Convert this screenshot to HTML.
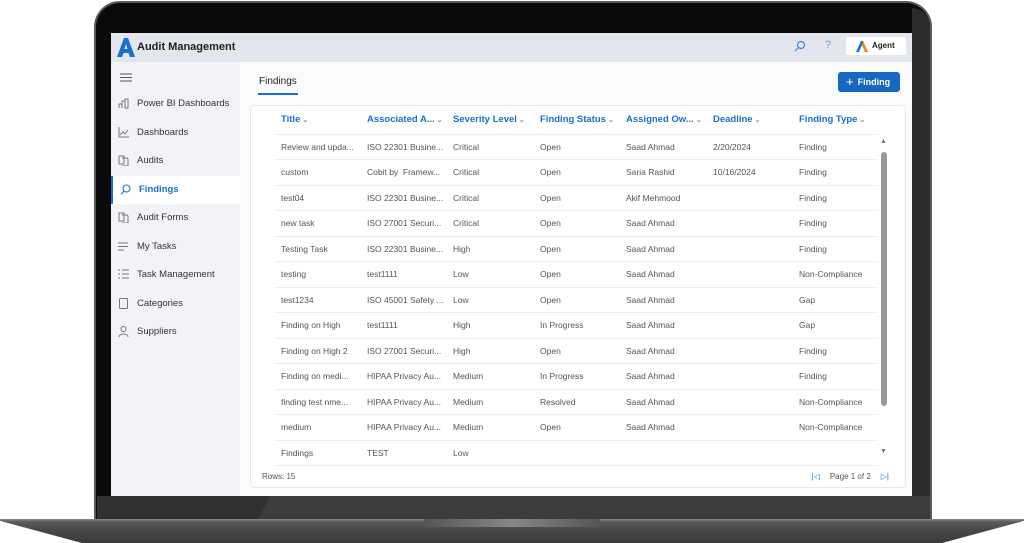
<!DOCTYPE html>
<html><head><meta charset="utf-8"><style>
*{margin:0;padding:0;box-sizing:border-box}
body{width:1024px;height:543px;background:#fff;position:relative;overflow:hidden;font-family:"Liberation Sans",sans-serif}
.bez{position:absolute;left:94px;top:1px;width:838px;height:522px;background:#0a0a0a;border-radius:26px 26px 0 0;border:2px solid #5a5a5a;border-bottom:none}
.bezr{position:absolute;left:912px;top:8px;width:18px;height:512px;background:#2c2c2c;border-radius:0 20px 0 0}
.chin{position:absolute;left:97px;top:496px;width:832px;height:24px;background:#303030}
.chinrefl{position:absolute;left:258px;top:496px;width:672px;height:24px;background:#3c3c3c;clip-path:polygon(12px 0,100% 0,100% 100%,0 100%)}
.base{position:absolute;left:0;top:519px;width:1024px;height:24px;background:linear-gradient(#8a8a8a 0,#5a5a5a 3px,#4a4a4a 10px,#3a3a3a 100%);clip-path:polygon(0 0,100% 0,100% 8%,92% 100%,8% 100%,0 8%)}
.notch{position:absolute;left:424px;top:519px;width:176px;height:8px;background:linear-gradient(90deg,#555,#888,#555);border-radius:0 0 4px 4px}
.screen{position:absolute;left:111px;top:33px;width:801px;height:463px;background:#fff;overflow:hidden}
.hdr{position:absolute;left:0;top:0;width:801px;height:29px;background:#e3e6ec}
.hdr .t{position:absolute;left:26px;top:8px;font-size:11px;font-weight:bold;color:#222}
.side{position:absolute;left:0;top:29px;width:129px;height:434px;background:#f2f3f6}
.nav{position:absolute;left:0;width:129px;height:28px;font-size:9.5px;color:#333;padding-left:26px;line-height:28px}
.nav svg{position:absolute;left:7px;top:8px}
.nav.act{background:#fff;color:#1a6fd0;font-weight:bold;border-left:2px solid #1a6fd0}
.main{position:absolute;left:129px;top:29px;width:672px;height:434px;background:#fafbfc}
.tab{position:absolute;left:19px;top:14px;font-size:10px;color:#222}
.tabline{position:absolute;left:18px;top:31px;width:40px;height:2px;background:#1a6fd0}
.btn{position:absolute;left:598px;top:10px;width:62px;height:20px;background:#1668c0;border-radius:3px;color:#fff;font-size:9px;font-weight:bold;line-height:20px;padding-left:8px}
.card{position:absolute;left:10px;top:43px;width:656px;height:383px;background:#fff;border:1px solid #e6e8ec;border-radius:4px}
table{position:absolute;left:24px;top:0;border-collapse:collapse;font-size:8.5px;color:#555}
td,th{height:25.5px;text-align:left;padding-left:6px;white-space:nowrap;border-bottom:1px solid #eceef1}
th{color:#1a6fd0;font-size:9.5px;height:28px;font-weight:bold}
th span{font-size:7px;color:#888;margin-left:2px}
.sb{position:absolute;left:630px;top:46px;width:6px;height:254px;background:#999;border-radius:3px}
.foot{position:absolute;left:11px;top:366px;font-size:8px;color:#555}
.pg{position:absolute;right:16px;top:366px;font-size:8px;color:#555}
</style></head><body>
<div class="bez"></div><div class="bezr"></div>
<div class="chin"></div><div class="chinrefl"></div>
<div class="base"></div><div class="notch"></div>
<div class="screen">
<div class="hdr">
<svg style="position:absolute;left:6px;top:5px" width="18" height="19" viewBox="0 0 18 19"><path d="M7 0h4l7 19h-5l-1.5-4h-5L5 19H0z" fill="#1a6fd0"/><path d="M7.5 11h3L9 6z" fill="#e3e6ec"/></svg>
<div class="t">Audit Management</div>
<svg style="position:absolute;left:683px;top:7px" width="12" height="12" viewBox="0 0 12 12"><circle cx="7" cy="5" r="3.5" fill="none" stroke="#3a86d8" stroke-width="1.2"/><path d="M4.5 7.5L1 11" stroke="#3a86d8" stroke-width="1.2"/></svg>
<div style="position:absolute;left:714px;top:6px;font-size:11px;color:#6a9ede">?</div>
<div style="position:absolute;left:735px;top:4px;width:60px;height:18px;background:#fff;border-radius:2px;font-size:8px;font-weight:bold;color:#222;line-height:18px;padding-left:26px">Agent
<svg style="position:absolute;left:10px;top:4px" width="12" height="11" viewBox="0 0 12 11"><path d="M5 0h2l5 11h-3L6 4 3 11H0z" fill="#1a6fd0"/><path d="M7 0l5 11H9L6 4z" fill="#f08a1c"/></svg></div>
</div>
<div class="side">
<svg style="position:absolute;left:9px;top:11px" width="12" height="9"><path d="M0 1h12M0 4.5h12M0 8h12" stroke="#555" stroke-width="1"/></svg>
<div class="nav" style="top:28px"><svg width="11" height="11"><path d="M1 10V6h3v4M4 10V3h3v7M7 10V1h3v9z" fill="none" stroke="#777"/></svg>Power BI Dashboards</div>
<div class="nav" style="top:57px"><svg width="11" height="11"><path d="M1 0v10h10M2 8l3-3 2 2 3-4" fill="none" stroke="#777"/></svg>Dashboards</div>
<div class="nav" style="top:85px"><svg width="11" height="11"><path d="M1 1h5v8H1zM4 3h5l1 1v7H4" fill="none" stroke="#777"/></svg>Audits</div>
<div class="nav act" style="top:114px"><svg width="11" height="11"><circle cx="6.5" cy="4.5" r="3.5" fill="none" stroke="#1a6fd0"/><path d="M4 7L1 10.5" stroke="#1a6fd0"/></svg>Findings</div>
<div class="nav" style="top:142px"><svg width="11" height="11"><path d="M1 1h5v8H1zM4 3h5l1 1v7H4" fill="none" stroke="#777"/></svg>Audit Forms</div>
<div class="nav" style="top:171px"><svg width="11" height="11"><path d="M0 2h10M0 5.5h10M0 9h6" stroke="#777"/></svg>My Tasks</div>
<div class="nav" style="top:199px"><svg width="11" height="11"><path d="M0 1h2M0 5h2M0 9h2M4 1h7M4 5h7M4 9h7" stroke="#777"/></svg>Task Management</div>
<div class="nav" style="top:228px"><svg width="11" height="11"><rect x="1.5" y=".5" width="8" height="10" rx="1" fill="none" stroke="#777"/></svg>Categories</div>
<div class="nav" style="top:256px"><svg width="11" height="11"><circle cx="5.5" cy="3" r="2.5" fill="none" stroke="#777"/><path d="M1 11c0-4 9-4 9 0" fill="none" stroke="#777"/></svg>Suppliers</div>
</div>
<div class="main">
<div class="tab">Findings</div><div class="tabline"></div>
<div class="btn"><span style="font-size:13px;font-weight:normal;vertical-align:-1px;margin-right:4px">+</span>Finding</div>
<div class="card">
<table>
<colgroup><col style="width:86px"><col style="width:86px"><col style="width:87px"><col style="width:86px"><col style="width:87px"><col style="width:86px"><col style="width:85px"></colgroup>
<tr><th>Title<span>⌄</span></th><th>Associated A...<span>⌄</span></th><th>Severity Level<span>⌄</span></th><th>Finding Status<span>⌄</span></th><th>Assigned Ow...<span>⌄</span></th><th>Deadline<span>⌄</span></th><th>Finding Type<span>⌄</span></th></tr>
<tr><td>Review and upda...</td><td>ISO 22301 Busine...</td><td>Critical</td><td>Open</td><td>Saad Ahmad</td><td>2/20/2024</td><td>Finding</td></tr>
<tr><td>custom</td><td>Cobit by &nbsp;Framew...</td><td>Critical</td><td>Open</td><td>Saria Rashid</td><td>10/16/2024</td><td>Finding</td></tr>
<tr><td>test04</td><td>ISO 22301 Busine...</td><td>Critical</td><td>Open</td><td>Akif Mehmood</td><td></td><td>Finding</td></tr>
<tr><td>new task</td><td>ISO 27001 Securi...</td><td>Critical</td><td>Open</td><td>Saad Ahmad</td><td></td><td>Finding</td></tr>
<tr><td>Testing Task</td><td>ISO 22301 Busine...</td><td>High</td><td>Open</td><td>Saad Ahmad</td><td></td><td>Finding</td></tr>
<tr><td>testing</td><td>test1111</td><td>Low</td><td>Open</td><td>Saad Ahmad</td><td></td><td>Non-Compliance</td></tr>
<tr><td>test1234</td><td>ISO 45001 Safety ...</td><td>Low</td><td>Open</td><td>Saad Ahmad</td><td></td><td>Gap</td></tr>
<tr><td>Finding on High</td><td>test1111</td><td>High</td><td>In Progress</td><td>Saad Ahmad</td><td></td><td>Gap</td></tr>
<tr><td>Finding on High 2</td><td>ISO 27001 Securi...</td><td>High</td><td>Open</td><td>Saad Ahmad</td><td></td><td>Finding</td></tr>
<tr><td>Finding on medi...</td><td>HIPAA Privacy Au...</td><td>Medium</td><td>In Progress</td><td>Saad Ahmad</td><td></td><td>Finding</td></tr>
<tr><td>finding test nme...</td><td>HIPAA Privacy Au...</td><td>Medium</td><td>Resolved</td><td>Saad Ahmad</td><td></td><td>Non-Compliance</td></tr>
<tr><td>medium</td><td>HIPAA Privacy Au...</td><td>Medium</td><td>Open</td><td>Saad Ahmad</td><td></td><td>Non-Compliance</td></tr>
<tr><td>Findings</td><td>TEST</td><td>Low</td><td></td><td></td><td></td><td></td></tr>
</table>
<div style="position:absolute;left:629px;top:32px;font-size:7px;color:#777">▲</div>
<div class="sb"></div>
<div style="position:absolute;left:629px;top:342px;font-size:7px;color:#777">▼</div>
<div class="foot">Rows: 15</div>
<div class="pg"><span style="color:#1a6fd0;margin-right:10px">|◁</span>Page 1 of 2<span style="color:#1a6fd0;margin-left:10px">▷|</span></div>
</div>
</div>
</div>
</body></html>
